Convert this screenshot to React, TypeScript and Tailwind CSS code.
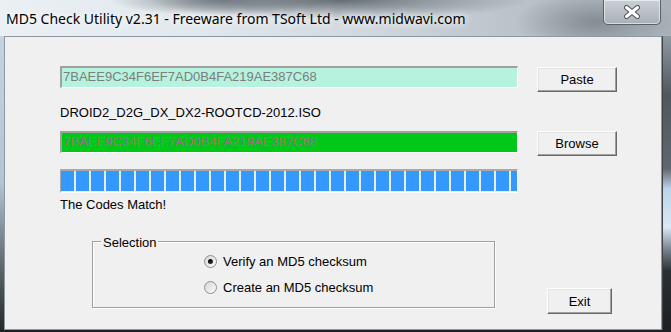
const hash = '7BAEE9C34F6EF7AD0B4FA219AE387C68'

const segments = Array.from({ length: 31 }, (_, i) => i)

const Button = ({ label, className }: { label: string; className: string }) => (
  <button
    className={`flex items-center justify-center bg-[#f0f0f0] border border-t-white border-l-white border-b-[#696969] border-r-[#696969] shadow-[inset_-1px_-1px_0_#a0a0a0,inset_1px_1px_0_#e3e3e3] text-[13px] text-black ${className}`}
  >
    {label}
  </button>
)

const Radio = ({ checked, label }: { checked?: boolean; label: string }) => (
  <div className="flex items-center h-[15px]">
    <span className="w-[13px] h-[13px] rounded-full border border-[#8e8f8f] bg-gradient-to-br from-[#d6d6d6] to-[#fbfbfb] flex items-center justify-center">
      {checked && <span className="w-[5px] h-[5px] rounded-full bg-gradient-to-br from-[#000] to-[#4a4a4a]" />}
    </span>
    <span className="ml-[6px]">{label}</span>
  </div>
)

const TitleBar = () => (
  <div className="h-[36px] flex justify-between pl-[6px] pr-[10px] bg-[radial-gradient(ellipse_190px_20px_at_340px_0px,#656d74_0%,rgba(101,109,116,0)_100%),radial-gradient(ellipse_110px_16px_at_220px_0px,#7a838a_0%,rgba(122,131,138,0)_100%),radial-gradient(ellipse_80px_30px_at_595px_22px,#858d94_0%,rgba(133,141,148,0)_100%),linear-gradient(to_right,#eaf0f4_0%,#e1e8ed_30%,#d0d7dd_55%,#bdc5cc_75%,#aab2b9_100%)]">
    <div className="pt-[9px] leading-[19px] text-[14px] text-black font-['Noto_Sans',sans-serif] [text-shadow:0_0_6px_#fff,0_0_10px_#fff]">
      MD5 Check Utility v2.31 - Freeware from TSoft Ltd - www.midwavi.com
    </div>
    <div className="w-[58px] h-[25px] rounded-b-[5px] border border-t-0 border-[#59606a] shadow-[inset_0_0_0_1px_rgba(255,255,255,0.55)] bg-gradient-to-b from-[#c9d0d6] to-[#a9b1b8] flex items-center justify-center">
      <svg width="18" height="14" viewBox="0 0 18 14">
        <path d="M3.5 2.5 L14.5 11.5 M14.5 2.5 L3.5 11.5" stroke="#4d545b" strokeWidth="5" strokeLinecap="round" />
        <path d="M3.5 2.5 L14.5 11.5 M14.5 2.5 L3.5 11.5" stroke="#ffffff" strokeWidth="3" strokeLinecap="round" />
      </svg>
    </div>
  </div>
)

const Client = () => (
  <div className="w-[658px] h-[294px] bg-[#f0f0f0] border border-[#8d98a2] pt-[29px] pl-[55px] flex flex-col text-[13px] leading-[15px] text-black">
    <div className="flex items-start">
      <div className="w-[458px] h-[22px] bg-[#b5f3de] border-t-2 border-l-2 border-[#a0a0a0] border-b border-r border-b-white border-r-white pl-[1px] pt-[1px] text-[#7d7d7d]">
        {hash}
      </div>
      <Button label="Paste" className="ml-[19px] mt-[1px] w-[80px] h-[25px]" />
    </div>
    <div className="mt-[13px]">DROID2_D2G_DX_DX2-ROOTCD-2012.ISO</div>
    <div className="flex items-start mt-[11px]">
      <div className="w-[458px] h-[22px] bg-[#00c818] border-t-2 border-l-2 border-[#a0a0a0] border-b border-r border-b-white border-r-white pl-[1px] pt-[1px] text-[#a36b8c]">
        {hash}
      </div>
      <Button label="Browse" className="ml-[19px] w-[80px] h-[25px]" />
    </div>
    <div className="mt-[13px] w-[458px] h-[24px] bg-[#e6eef6] border-t-2 border-l border-[#a9a9a9] border-b border-r border-b-white border-r-white pb-[1px] pr-[1px] flex gap-[2px] overflow-hidden">
      {segments.map((i) => (
        <div key={i} className="w-[13px] h-[20px] shrink-0 bg-[#3399ff]" />
      ))}
    </div>
    <div className="mt-[4px]">The Codes Match!</div>
    <div className="flex items-start mt-[29px] pl-[32px]">
      <div className="relative w-[403px] h-[67px] border border-[#a0a0a0] shadow-[inset_1px_1px_0_#fff,1px_1px_0_#fff] pt-[12px] pl-[111px] flex flex-col gap-[11px]">
        <span className="absolute -top-[7px] left-[8px] px-[2px] bg-[#f0f0f0]">Selection</span>
        <Radio checked label="Verify an MD5 checksum" />
        <Radio label="Create an MD5 checksum" />
      </div>
      <Button label="Exit" className="ml-[52px] mt-[47px] w-[65px] h-[26px]" />
    </div>
  </div>
)

export default function App() {
  return (
    <div className="w-[671px] h-[332px] overflow-hidden flex flex-col bg-[#23282b] font-['Liberation_Sans',Arial,sans-serif]">
      <TitleBar />
      <div className="flex h-[294px]">
        <div className="w-[4px] bg-gradient-to-b from-[#c4d3e0] via-[#b2c5d6] to-[#262b27]" />
        <Client />
        <div className="w-[9px] bg-[linear-gradient(to_bottom,#8f99a1_0%,#50575d_20%,#5f666d_45%,#bcd3ea_52%,#dbe8f5_65%,#7f8b97_72%,#2a2f33_80%,#1c2023_100%)] border-l border-[#3e4449]" />
      </div>
      <div className="h-[2px] bg-[#1d2124]" />
    </div>
  )
}
